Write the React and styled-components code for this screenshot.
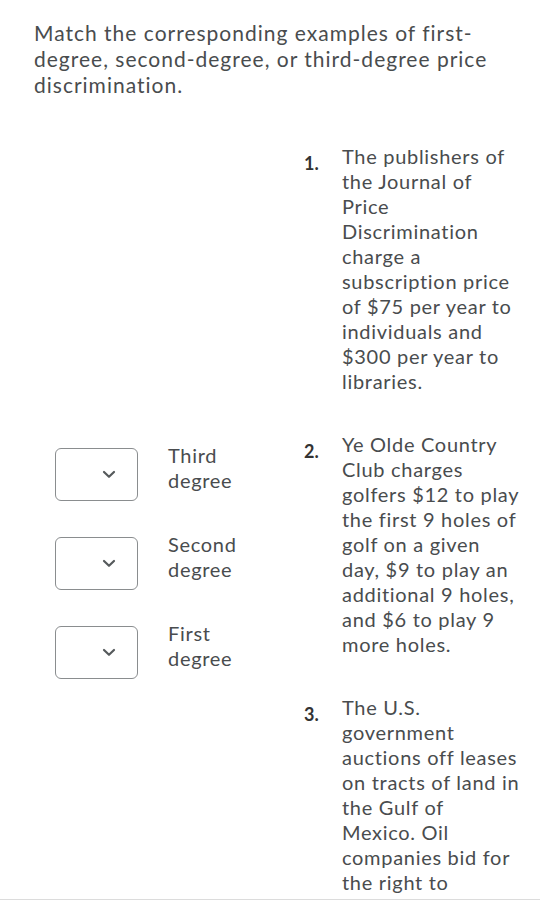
import React from "react";
import styled, { createGlobalStyle } from "styled-components";

const Global = createGlobalStyle`
  html, body { margin: 0; padding: 0; background: #ffffff; }
  body {
    font-family: Lato, "Noto Sans", sans-serif;
    color: #494c4e;
    font-variant-ligatures: none;
  }
`;

const Page = styled.div`
  padding: 20px 34px 0 34px;
`;

const Prompt = styled.p`
  margin: 0;
  font-size: 21px;
  line-height: 26px;
  letter-spacing: 1px;
  color: #494c4e;
`;

const Matching = styled.div`
  display: flex;
  align-items: flex-start;
  margin-top: 46px;
`;

const Choices = styled.div`
  display: flex;
  flex-direction: column;
  gap: 36px;
  margin-top: 304px;
  margin-left: 21px;
  width: 249px;
  flex: none;
`;

const ChoiceRow = styled.div`
  display: flex;
  align-items: flex-start;
  gap: 30px;
`;

const SelectBox = styled.div`
  box-sizing: border-box;
  flex: none;
  width: 83px;
  height: 53px;
  border: 1px solid #8a8d8f;
  border-radius: 6px;
  background: #fff;
  display: flex;
  align-items: center;
  justify-content: flex-end;
  padding-right: 21px;
`;

const Label = styled.div`
  font-size: 20px;
  line-height: 25px;
  letter-spacing: 0.7px;
  margin-top: -5px;
  color: #494c4e;
`;

const Items = styled.ol`
  list-style: none;
  margin: 0;
  padding: 0;
  display: flex;
  flex-direction: column;
  gap: 38px;
`;

const Item = styled.li`
  display: flex;
  align-items: flex-start;
`;

const Num = styled.span`
  width: 38px;
  flex: none;
  font-family: Lato, sans-serif;
  font-weight: 700;
  font-size: 18px;
  line-height: 18px;
  padding-top: 10px;
  color: #333;
`;

const Text = styled.div`
  width: 180px;
  font-size: 20px;
  line-height: 25px;
  letter-spacing: 0.7px;
  color: #494c4e;
`;

const BottomBar = styled.div`
  position: fixed;
  left: 0;
  right: 0;
  bottom: 0;
  height: 7px;
  background: #fff;
  border-top: 1px solid #dcdcdc;
`;

const Chevron = () => (
  <svg width="14" height="9" viewBox="0 0 14 9" aria-hidden="true">
    <path
      d="M2 2 L7 6.8 L12 2"
      fill="none"
      stroke="#565a5c"
      strokeWidth="2.2"
      strokeLinecap="round"
      strokeLinejoin="round"
    />
  </svg>
);

const choices = [
  ["Third", "degree"],
  ["Second", "degree"],
  ["First", "degree"],
];

const items = [
  "The publishers of the Journal of Price Discrimination charge a subscription price of $75 per year to individuals and $300 per year to libraries.",
  "Ye Olde Country Club charges golfers $12 to play the first 9 holes of golf on a given day, $9 to play an additional 9 holes, and $6 to play 9 more holes.",
  "The U.S. government auctions off leases on tracts of land in the Gulf of Mexico. Oil companies bid for the right to purchase these leases.",
];

export default function App() {
  return (
    <>
      <Global />
      <Page>
        <Prompt>
          Match the corresponding examples of first-degree, second-degree, or
          third-degree price discrimination.
        </Prompt>
        <Matching>
          <Choices>
            {choices.map(([a, b]) => (
              <ChoiceRow key={a}>
                <SelectBox>
                  <Chevron />
                </SelectBox>
                <Label>
                  {a}
                  <br />
                  {b}
                </Label>
              </ChoiceRow>
            ))}
          </Choices>
          <Items>
            {items.map((t, i) => (
              <Item key={i}>
                <Num>{i + 1}.</Num>
                <Text>{t}</Text>
              </Item>
            ))}
          </Items>
        </Matching>
      </Page>
      <BottomBar />
    </>
  );
}
